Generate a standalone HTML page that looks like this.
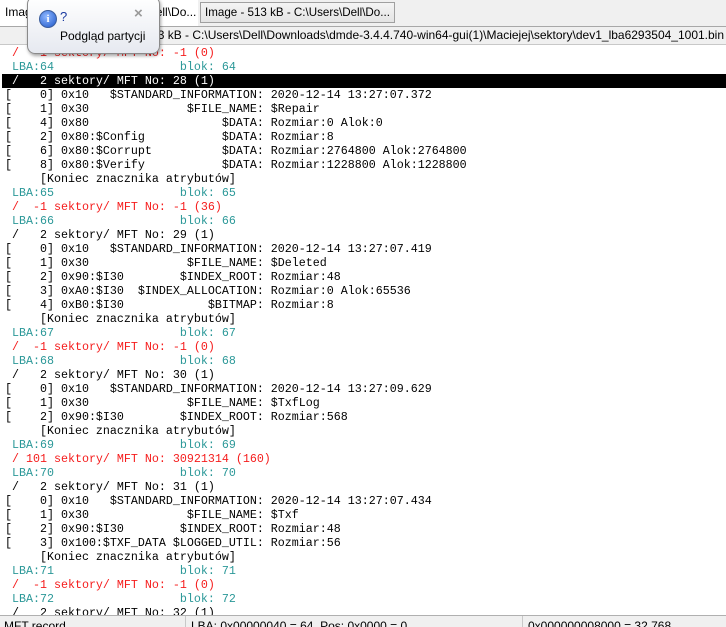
<!DOCTYPE html>
<html><head><meta charset="utf-8"><style>
html,body{margin:0;padding:0;width:726px;height:627px;overflow:hidden;background:#fff;position:relative;font-family:"Liberation Sans",sans-serif}
.tabs{position:absolute;left:0;top:0;width:726px;height:26px;background:#f0f0f0}
.tab1{position:absolute;left:0;top:0;width:198px;height:26px;background:#fff;font-size:12px;line-height:24px;padding-left:5px;box-sizing:border-box;white-space:nowrap}
.tab2{position:absolute;left:200px;top:2px;width:195px;height:21px;border:1px solid #a0a0a0;font-size:11.6px;line-height:19px;padding-left:4px;box-sizing:border-box;background:linear-gradient(#f4f4f4,#e4e4e4);white-space:nowrap;overflow:hidden}
.bar{position:absolute;left:0;top:26px;width:726px;height:19px;background:#f0f0f0;border-top:1px solid #a8a8a8;border-bottom:1px solid #c8c8c8;box-sizing:border-box;font-size:12px;line-height:17px;padding-left:53px;white-space:nowrap;overflow:hidden}
pre{position:absolute;left:5px;top:46px;margin:0;font-family:"Liberation Mono",monospace;font-size:11.67px;line-height:14px;color:#000}
pre div{height:14px;white-space:pre}
.r{color:#f51c1c}.t{color:#2b9898}
.hl{background:#000;color:#fff;margin-left:-3px;padding-left:3px;width:726px}
.status{position:absolute;left:0;top:615px;width:726px;height:12px;background:#f0f0f0;border-top:1px solid #b0b0b0;font-size:12px;overflow:hidden}
.status span{position:absolute;top:3px;white-space:nowrap}
.sep{position:absolute;top:0;width:1px;height:18px;background:#c8c8c8}
.pop{position:absolute;left:27px;top:-4px;width:131px;height:56px;border:1px solid #8a8a8a;border-radius:8px;background:linear-gradient(#ffffff,#e6e9f0);box-shadow:1px 2px 3px rgba(0,0,0,.35)}
.ic{position:absolute;left:11px;top:13px;width:16px;height:16px;border-radius:50%;background:radial-gradient(circle at 40% 35%,#8fb8ff,#1c55c8);border:1px solid #3a5c9c;color:#fff;font:bold 11px "Liberation Serif",serif;text-align:center;line-height:16px}
</style></head><body>
<div class="tabs">
<div class="tab1">Image - 513 kB - C:\Users\Dell\Do...</div>
<div class="tab2">Image - 513 kB - C:\Users\Dell\Do...</div>
</div>
<div class="bar">Sektory: Image - 513 kB - C:\Users\Dell\Downloads\dmde-3.4.4.740-win64-gui(1)\Maciejej\sektory\dev1_lba6293504_1001.bin</div>
<pre><div class="r"> /  -1 sektory/ MFT No: -1 (0)</div><div class="t"> LBA:64                  blok: 64</div><div class="hl"> /   2 sektory/ MFT No: 28 (1)</div><div>[    0] 0x10   $STANDARD_INFORMATION: 2020-12-14 13:27:07.372</div><div>[    1] 0x30              $FILE_NAME: $Repair</div><div>[    4] 0x80                   $DATA: Rozmiar:0 Alok:0</div><div>[    2] 0x80:$Config           $DATA: Rozmiar:8</div><div>[    6] 0x80:$Corrupt          $DATA: Rozmiar:2764800 Alok:2764800</div><div>[    8] 0x80:$Verify           $DATA: Rozmiar:1228800 Alok:1228800</div><div>     [Koniec znacznika atrybutów]</div><div class="t"> LBA:65                  blok: 65</div><div class="r"> /  -1 sektory/ MFT No: -1 (36)</div><div class="t"> LBA:66                  blok: 66</div><div> /   2 sektory/ MFT No: 29 (1)</div><div>[    0] 0x10   $STANDARD_INFORMATION: 2020-12-14 13:27:07.419</div><div>[    1] 0x30              $FILE_NAME: $Deleted</div><div>[    2] 0x90:$I30        $INDEX_ROOT: Rozmiar:48</div><div>[    3] 0xA0:$I30  $INDEX_ALLOCATION: Rozmiar:0 Alok:65536</div><div>[    4] 0xB0:$I30            $BITMAP: Rozmiar:8</div><div>     [Koniec znacznika atrybutów]</div><div class="t"> LBA:67                  blok: 67</div><div class="r"> /  -1 sektory/ MFT No: -1 (0)</div><div class="t"> LBA:68                  blok: 68</div><div> /   2 sektory/ MFT No: 30 (1)</div><div>[    0] 0x10   $STANDARD_INFORMATION: 2020-12-14 13:27:09.629</div><div>[    1] 0x30              $FILE_NAME: $TxfLog</div><div>[    2] 0x90:$I30        $INDEX_ROOT: Rozmiar:568</div><div>     [Koniec znacznika atrybutów]</div><div class="t"> LBA:69                  blok: 69</div><div class="r"> / 101 sektory/ MFT No: 30921314 (160)</div><div class="t"> LBA:70                  blok: 70</div><div> /   2 sektory/ MFT No: 31 (1)</div><div>[    0] 0x10   $STANDARD_INFORMATION: 2020-12-14 13:27:07.434</div><div>[    1] 0x30              $FILE_NAME: $Txf</div><div>[    2] 0x90:$I30        $INDEX_ROOT: Rozmiar:48</div><div>[    3] 0x100:$TXF_DATA $LOGGED_UTIL: Rozmiar:56</div><div>     [Koniec znacznika atrybutów]</div><div class="t"> LBA:71                  blok: 71</div><div class="r"> /  -1 sektory/ MFT No: -1 (0)</div><div class="t"> LBA:72                  blok: 72</div><div> /   2 sektory/ MFT No: 32 (1)</div></pre>
<div class="status"><span style="left:4px">MFT record</span><div class="sep" style="left:185px"></div><span style="left:191px">LBA: 0x00000040 = 64, Pos: 0x0000 = 0</span><div class="sep" style="left:522px"></div><span style="left:528px">0x000000008000 = 32 768</span></div>
<div class="pop"><div class="ic">i</div><div style="position:absolute;left:32px;top:12px;font-size:13px;color:#1a3aa0">?</div><div style="position:absolute;left:106px;top:8px;font:bold 15px 'Liberation Sans',sans-serif;color:#9a9a9a">×</div><div style="position:absolute;left:32px;top:32px;font-size:12px;color:#000">Podgląd partycji</div></div>
</body></html>
